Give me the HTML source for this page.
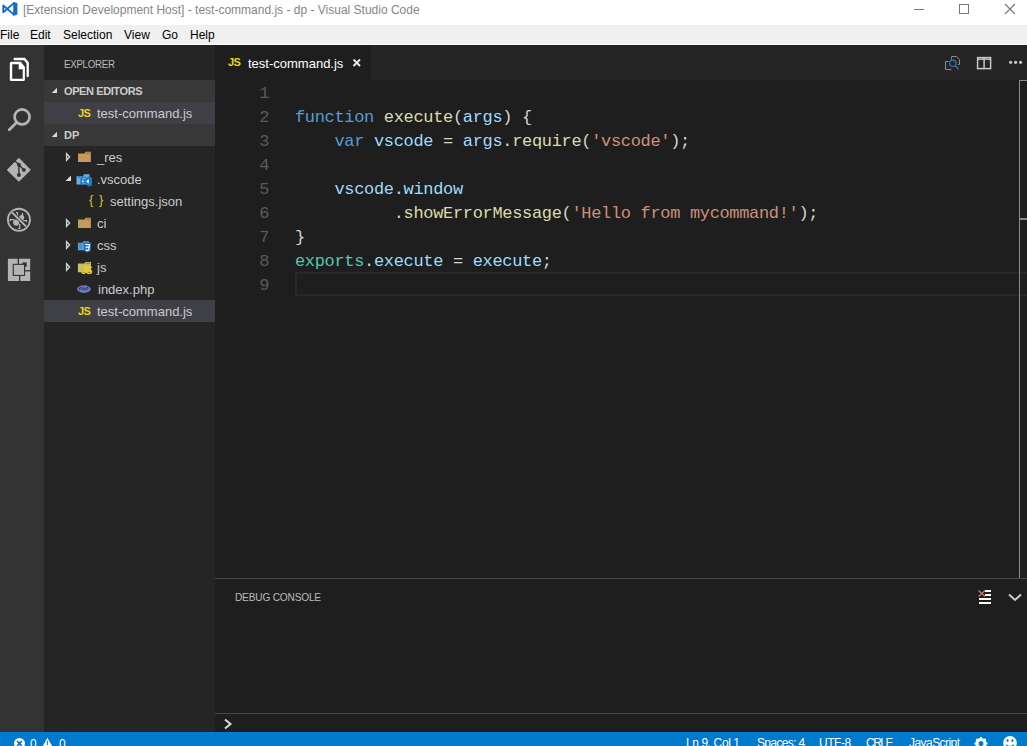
<!DOCTYPE html>
<html><head><meta charset="utf-8">
<style>
*{margin:0;padding:0;box-sizing:border-box}
html,body{width:1027px;height:746px;overflow:hidden;background:#1e1e1e;font-family:"Liberation Sans",sans-serif}
.abs{position:absolute}
svg{position:absolute;overflow:visible}
#title{left:0;top:0;width:1027px;height:25px;background:#fff}
#ttext{left:23px;top:3.3px;font-size:12px;color:#858585;white-space:pre;line-height:14px}
#menu{left:0;top:25px;width:1027px;height:19px;background:#f0f0f0}
#menuline{left:0;top:44px;width:1027px;height:1px;background:#fff}
.mi{position:absolute;top:3px;font-size:12px;color:#000;line-height:14px;white-space:pre}
#act{left:0;top:45px;width:44px;height:687px;background:#333}
#side{left:44px;top:45px;width:171px;height:687px;background:#252526}
#tabs{left:215px;top:45px;width:812px;height:35px;background:#252526}
#tab{left:215px;top:45px;width:156px;height:35px;background:#1e1e1e}
#status{left:0;top:732px;width:1027px;height:14px;background:#007acc}
.lbl{position:absolute;white-space:pre;line-height:14px}
.row{position:absolute;left:44px;width:171px;height:22px}
.code{position:absolute;left:295px;font-family:"Liberation Mono",monospace;font-size:17px;letter-spacing:-0.33px;line-height:24px;white-space:pre;color:#d4d4d4}
.ln{position:absolute;left:215px;width:54px;text-align:right;font-family:"Liberation Mono",monospace;font-size:17px;letter-spacing:-0.33px;line-height:24px;color:#5a5a5a}
.k{color:#569cd6}.f{color:#dcdcaa}.v{color:#9cdcfe}.s{color:#ce9178}.t{color:#4ec9b0}
.st{position:absolute;top:736px;font-size:12px;color:#fff;line-height:14px;white-space:pre}
</style></head><body>
<div id="title" class="abs"></div>
<!-- vscode logo -->
<svg width="24" height="20" style="left:0;top:0">
  <path d="M14.2,2.9 L3.3,12.2 L3.3,5.5 L14.2,14.9" fill="none" stroke="#0f6fc6" stroke-width="1.9" stroke-linejoin="round"/>
  <path d="M13.2,1.8 L17.4,3.3 L17.4,14.6 L13.2,16.1 Z" fill="#0f6fc6"/>
</svg>
<div id="ttext" class="abs">[Extension Development Host] - test-command.js - dp - Visual Studio Code</div>
<!-- window controls -->
<div class="abs" style="left:914px;top:9px;width:10px;height:1px;background:#777"></div>
<div class="abs" style="left:959px;top:4px;width:10px;height:10px;border:1px solid #777"></div>
<svg width="12" height="12" style="left:1004px;top:3px"><path d="M1,1 L11,11 M11,1 L1,11" stroke="#777" stroke-width="1.1"/></svg>

<div id="menu" class="abs">
  <span class="mi" style="left:0px">File</span>
  <span class="mi" style="left:30px">Edit</span>
  <span class="mi" style="left:63px">Selection</span>
  <span class="mi" style="left:124px">View</span>
  <span class="mi" style="left:162px">Go</span>
  <span class="mi" style="left:190px">Help</span>
</div>
<div id="menuline" class="abs"></div>
<div id="act" class="abs"></div>
<div id="side" class="abs"></div>
<div id="tabs" class="abs"></div>
<div id="tab" class="abs"></div>

<!-- activity bar icons -->
<svg width="44" height="746" style="left:0;top:0">
  <path fill="#fff" fill-rule="evenodd" d="M11.3,61.8 L20.9,61.8 L24.9,66.9 L24.9,79.4 Q24.9,80.9 23.4,80.9 L11.3,80.9 Q9.8,80.9 9.8,79.4 L9.8,63.3 Q9.8,61.8 11.3,61.8 Z M12.2,64.2 L18.7,64.2 L18.7,69.3 L22.7,69.3 L22.7,78.7 L12.2,78.7 Z"/>
  <path d="M14.6,59 L24.4,59 L27.7,62.9 L27.7,76" fill="none" stroke="#fff" stroke-width="2.3" stroke-linecap="round" stroke-linejoin="miter"/>
  <circle cx="22.1" cy="116.9" r="7.5" fill="none" stroke="#b4b4b4" stroke-width="2.7"/>
  <path d="M16.6,122.5 L9.3,129.7" stroke="#b4b4b4" stroke-width="2.8" stroke-linecap="round"/>
  <path d="M18.9,158.3 L30.4,169.9 L18.9,181.3 L7.3,169.9 Z" fill="#b4b4b4" stroke="#b4b4b4" stroke-width="1" stroke-linejoin="round"/>
  <path d="M15,160.9 L18.9,164.7 L18.9,175 M18.9,164.7 L23.9,169.9" stroke="#333" stroke-width="1.4" fill="none"/>
  <circle cx="18.9" cy="164.7" r="1.9" fill="#333"/>
  <circle cx="23.9" cy="169.9" r="1.9" fill="#333"/>
  <circle cx="18.9" cy="175.1" r="2" fill="#333"/>
  <circle cx="18.95" cy="219.8" r="11.05" fill="none" stroke="#b4b4b4" stroke-width="1.8"/>
  <circle cx="16.2" cy="222.6" r="3.1" fill="#b4b4b4"/>
  <circle cx="21.6" cy="217.6" r="2.6" fill="#b4b4b4"/>
  <path d="M10.3,221 L10.3,219.6 L14.5,219.6 M17.5,215.8 L17.5,212.6 L16.2,212.6 M22.5,213 L22.5,216 M22.9,220.6 L26.5,220.6 L26.5,222 M19.7,224 L19.7,228.4 L18.3,228.4" fill="none" stroke="#b4b4b4" stroke-width="1.3"/>
  <path d="M11.6,212 L26.1,226.5" stroke="#333" stroke-width="3.4"/>
  <path d="M11.6,212 L26.1,226.5" stroke="#b4b4b4" stroke-width="1.8"/>
  <path d="M7.9,258.7 H17.7 V264.3 H13.2 V275.5 H19 V281 H7.9 Z" fill="#b4b4b4"/>
  <path d="M19,258.7 H30.2 V270.1 H19 Z" fill="#b4b4b4"/>
  <path d="M22.5,262.4 H26.7 V266.7 H22.5 Z" fill="#333"/>
  <path d="M20.3,271.4 H30.2 V281 H20.3 Z" fill="#b4b4b4"/>
  <rect x="12.7" y="263.8" width="12.4" height="12.2" fill="#333"/>
  <rect x="13.8" y="264.9" width="10.2" height="10" fill="#b4b4b4"/>
</svg>

<!-- sidebar -->
<div class="lbl" style="left:64px;top:57px;font-size:11px;color:#bbb;letter-spacing:-0.3px;transform:scaleX(0.88);transform-origin:0 0">EXPLORER</div>
<div class="row" style="top:80px;background:#383838"></div>
<div class="lbl" style="left:64px;top:84px;font-size:11px;font-weight:bold;color:#ccc;letter-spacing:-0.4px">OPEN EDITORS</div>
<div class="row" style="top:102px;background:#3f3f46"></div>
<div class="lbl" style="left:78px;top:106px;font-size:11px;font-weight:bold;color:#ecd418;letter-spacing:-0.6px">JS</div>
<div class="lbl" style="left:97px;top:107px;font-size:13px;color:#ccc">test-command.js</div>
<div class="row" style="top:124px;background:#383838"></div>
<div class="lbl" style="left:64px;top:128px;font-size:11px;font-weight:bold;color:#ccc">DP</div>
<div class="row" style="top:300px;background:#3f3f46"></div>

<svg width="215" height="746" style="left:0;top:0">
  <!-- twisties -->
  <path d="M57,87.7 L57,93 L51.7,93 Z" fill="#d8d8d8"/>
  <path d="M57,131.7 L57,137 L51.7,137 Z" fill="#d8d8d8"/>
  <path d="M66.6,153.7 L69.6,157 L66.6,160.3 Z" fill="none" stroke="#d0d0d0" stroke-width="1.4" stroke-linejoin="miter"/>
  <path d="M71,175.5 L71,180.9 L65.5,180.9 Z" fill="#e0e0e0"/>
  <path d="M66.6,219.7 L69.6,223 L66.6,226.3 Z" fill="none" stroke="#d0d0d0" stroke-width="1.4"/>
  <path d="M66.6,241.7 L69.6,245 L66.6,248.3 Z" fill="none" stroke="#d0d0d0" stroke-width="1.4"/>
  <path d="M66.6,263.7 L69.6,267 L66.6,270.3 Z" fill="none" stroke="#d0d0d0" stroke-width="1.4"/>
  <!-- _res folder -->
  <path d="M78,153.4 L84.6,153.4 L85.4,151.7 L90.9,151.7 L90.9,162.1 L78,162.1 Z" fill="#c69a5d"/>
  <path d="M85.8,153.2 L90.2,153.2" stroke="#7b5f3a" stroke-width="0.7"/>
  <!-- ci folder -->
  <path d="M78,219.4 L84.6,219.4 L85.4,217.7 L90.9,217.7 L90.9,228.1 L78,228.1 Z" fill="#c69a5d"/>
  <path d="M85.8,219.2 L90.2,219.2" stroke="#7b5f3a" stroke-width="0.7"/>
  <!-- .vscode folder -->
  <path d="M76.5,176.2 L83,176.2 L84,174.2 L89.5,174.2 L89.5,184.6 L76.5,184.6 Z" fill="#6aaee6"/>
  <path d="M78,177.2 L86,177.2" stroke="#2b5d8a" stroke-width="0.8"/>
  <path d="M88.6,176.4 L92,177.6 L92,185.6 L88.6,186.8 Z" fill="#1a78d0"/>
  <path d="M88.9,177.3 L81.4,183.5 L81.4,179.1 L88.9,185.8" fill="none" stroke="#1a78d0" stroke-width="2" stroke-linejoin="round"/>
  <path d="M82.3,179.9 L84.2,181.3 L82.3,182.7 Z M86.2,181.3 L88.7,179.2 L88.7,183.4 Z" fill="#fff"/>
  <!-- css folder -->
  <path d="M77.9,242.8 L82.5,242.8 L83.2,241.3 L89,241.3 L89,250.3 L77.9,250.3 Z" fill="#5d9fd8"/>
  <path d="M79,244 L82,244 M79,246 L82,246 M79,248 L82,248" stroke="#3f7fb8" stroke-width="0.8"/>
  <path d="M83.4,242.6 L91.2,242.6 L90.4,251 L87.3,252.5 L84.2,251 Z" fill="#1c75c4"/>
  <path d="M85.2,244.5 L89.3,244.5 L88.9,249.8 L87.3,250.5 L85.6,249.8 M85.6,247.2 L89,247.2" fill="none" stroke="#fff" stroke-width="1.2"/>
  <!-- js folder -->
  <path d="M77.9,263.6 L84.4,263.6 L85.2,261.9 L91,261.9 L91,272.2 L77.9,272.2 Z" fill="#c9bd66"/>
  <path d="M85.6,263.4 L90.4,263.4" stroke="#7d7440" stroke-width="0.7"/>
  <!-- php -->
  <ellipse cx="83.9" cy="289.1" rx="6.9" ry="3.8" fill="#6d7dbf"/>
  <path d="M79,290.5 L79.8,287.5 L81.3,287.5 Q82,288.3 81,289.2 L79.6,289.2 M82.6,290.3 L83.5,286.8 M83.1,288.3 L84.8,288.3 L84.3,290.3 M85.8,290.5 L86.6,287.5 L88.1,287.5 Q88.8,288.3 87.8,289.2 L86.4,289.2" fill="none" stroke="#2a2e50" stroke-width="0.8"/>
</svg>
<div class="lbl" style="left:97px;top:151px;font-size:13px;color:#ccc">_res</div>
<div class="lbl" style="left:97px;top:173px;font-size:13px;color:#ccc">.vscode</div>
<div class="lbl" style="left:89px;top:193px;font-size:13px;color:#d7c12c;letter-spacing:1px">{ }</div>
<div class="lbl" style="left:110px;top:195px;font-size:13px;color:#ccc">settings.json</div>
<div class="lbl" style="left:97px;top:217px;font-size:13px;color:#ccc">ci</div>
<div class="lbl" style="left:97px;top:239px;font-size:13px;color:#ccc">css</div>
<div class="lbl" style="left:81px;top:264px;font-size:10px;font-weight:bold;color:#ecd418;letter-spacing:-0.8px">JS</div>
<div class="lbl" style="left:97px;top:261px;font-size:13px;color:#ccc">js</div>
<div class="lbl" style="left:98px;top:283px;font-size:13px;color:#ccc">index.php</div>
<div class="lbl" style="left:78px;top:304px;font-size:11px;font-weight:bold;color:#ecd418;letter-spacing:-0.6px">JS</div>
<div class="lbl" style="left:97px;top:305px;font-size:13px;color:#ccc">test-command.js</div>

<!-- tab -->
<div class="lbl" style="left:228px;top:55px;font-size:11px;font-weight:bold;color:#ecd418;letter-spacing:-0.6px">JS</div>
<div class="lbl" style="left:248px;top:57px;font-size:13px;color:#fff">test-command.js</div>
<svg width="10" height="10" style="left:352px;top:58px"><path d="M1.5,1.5 L8,8 M8,1.5 L1.5,8" stroke="#e8e8e8" stroke-width="1.9"/></svg>

<!-- editor actions -->
<svg width="1027" height="90" style="left:0;top:0">
  <path d="M951.5,59.5 L951.5,56.5 L956.5,56.5 L959.5,59.5 L959.5,64.5 L958,64.5" fill="none" stroke="#8c8c8c" stroke-width="1"/>
  <path d="M948.5,61.5 L945.5,61.5 L945.5,69.5 L951.5,69.5" fill="none" stroke="#8c8c8c" stroke-width="1"/>
  <circle cx="952.8" cy="63.3" r="3.2" fill="none" stroke="#3b74b8" stroke-width="1.15"/>
  <path d="M955.2,65.8 L958.6,69.3" stroke="#3b74b8" stroke-width="1.3"/>
  <rect x="977.6" y="57.6" width="13" height="11" fill="none" stroke="#c8c8c8" stroke-width="1.5"/>
  <path d="M977.6,59.2 L990.6,59.2" stroke="#c8c8c8" stroke-width="1.4"/>
  <path d="M984.1,58 L984.1,68.5" stroke="#c8c8c8" stroke-width="1.5"/>
  <circle cx="1010.6" cy="62.3" r="1.6" fill="#c8c8c8"/><circle cx="1015.6" cy="62.3" r="1.6" fill="#c8c8c8"/><circle cx="1020.6" cy="62.3" r="1.6" fill="#c8c8c8"/>
</svg>

<!-- line numbers -->
<div class="ln" style="top:82px">1</div>
<div class="ln" style="top:106px">2</div>
<div class="ln" style="top:130px">3</div>
<div class="ln" style="top:154px">4</div>
<div class="ln" style="top:178px">5</div>
<div class="ln" style="top:202px">6</div>
<div class="ln" style="top:226px">7</div>
<div class="ln" style="top:250px">8</div>
<div class="ln" style="top:274px">9</div>

<!-- current line -->
<div class="abs" style="left:295px;top:272px;width:732px;height:24px;border:2px solid #282828;border-right:none"></div>

<div class="code" style="top:106px"><span class="k">function</span> <span class="f">execute</span>(<span class="v">args</span>) {</div>
<div class="code" style="top:130px">    <span class="k">var</span> <span class="v">vscode</span> = <span class="v">args</span>.<span class="f">require</span>(<span class="s">'vscode'</span>);</div>
<div class="code" style="top:178px">    <span class="v">vscode</span>.<span class="v">window</span></div>
<div class="code" style="top:202px">          .<span class="f">showErrorMessage</span>(<span class="s">'Hello from mycommand!'</span>);</div>
<div class="code" style="top:226px">}</div>
<div class="code" style="top:250px"><span class="t">exports</span>.<span class="v">execute</span> = <span class="v">execute</span>;</div>

<!-- overview ruler -->
<div class="abs" style="left:1019px;top:80px;width:1px;height:498px;background:#8a8a8a"></div>
<div class="abs" style="left:1019px;top:80px;width:8px;height:1px;background:#8a8a8a"></div>
<div class="abs" style="left:1020px;top:218px;width:7px;height:2px;background:#8a8a8a"></div>

<!-- panel -->
<div class="abs" style="left:215px;top:578px;width:812px;height:1px;background:#474747"></div>
<div class="lbl" style="left:235px;top:590px;font-size:11px;color:#bbb;letter-spacing:-0.2px;transform:scaleX(0.92);transform-origin:0 0">DEBUG CONSOLE</div>
<svg width="16" height="16" style="left:977px;top:589px">
  <rect x="8" y="1" width="6" height="2" fill="#fff"/>
  <rect x="8" y="5" width="6" height="2" fill="#fff"/>
  <rect x="2" y="9" width="12" height="2" fill="#fff"/>
  <rect x="2" y="13" width="12" height="2" fill="#fff"/>
  <path d="M1.5,1.5 L8,7.5 M8,1.5 L1.5,7.5" stroke="#d0775f" stroke-width="1.3"/>
</svg>
<svg width="16" height="10" style="left:1007px;top:592px"><path d="M2,2.5 L8,8 L14,2.5" fill="none" stroke="#ccc" stroke-width="2"/></svg>
<div class="abs" style="left:215px;top:713px;width:812px;height:1px;background:#474747"></div>
<svg width="12" height="12" style="left:222px;top:718px"><path d="M3,1.5 L8.5,6 L3,10.5" fill="none" stroke="#ddd" stroke-width="2"/></svg>

<!-- status bar -->
<div id="status" class="abs"></div>
<svg width="1027" height="746" style="left:0;top:0">
  <circle cx="19.5" cy="743.5" r="5.5" fill="#fff"/>
  <path d="M17.2,741.2 L21.8,745.8 M21.8,741.2 L17.2,745.8" stroke="#007acc" stroke-width="1.8"/>
  <path d="M47.4,737.8 L53.2,748 L41.6,748 Z" fill="#fff"/>
  <path d="M47.4,740.6 L47.4,745" stroke="#007acc" stroke-width="1"/>
</svg>
<div class="st" style="left:30px;top:737px">0</div>
<div class="st" style="left:59px;top:737px">0</div>
<div class="st" style="left:686px;letter-spacing:-0.4px">Ln 9, Col 1</div>
<div class="st" style="left:757px;letter-spacing:-0.65px">Spaces: 4</div>
<div class="st" style="left:819px;letter-spacing:-0.45px">UTF-8</div>
<div class="st" style="left:866px;letter-spacing:-1.5px">CRLF</div>
<div class="st" style="left:909px;letter-spacing:-0.55px">JavaScript</div>
<svg width="1027" height="746" style="left:0;top:0">
  <circle cx="981" cy="743.6" r="4.4" fill="none" stroke="#fff" stroke-width="2.6"/>
  <path d="M981,737 L981,750 M974.5,743.6 L987.5,743.6 M976.4,739 L985.6,748.2 M985.6,739 L976.4,748.2" stroke="#fff" stroke-width="1.9"/>
  <ellipse cx="981" cy="743.6" rx="2.3" ry="2.7" fill="#007acc"/>
  <circle cx="1010" cy="742.9" r="6.9" fill="#fff"/>
  <ellipse cx="1007.6" cy="740.4" rx="1" ry="1.5" fill="#007acc"/>
  <ellipse cx="1012.4" cy="740.4" rx="1" ry="1.5" fill="#007acc"/>
  <path d="M1006,744.6 Q1010,748.5 1014,744.6" fill="none" stroke="#007acc" stroke-width="1.1"/>
</svg>
</body></html>
